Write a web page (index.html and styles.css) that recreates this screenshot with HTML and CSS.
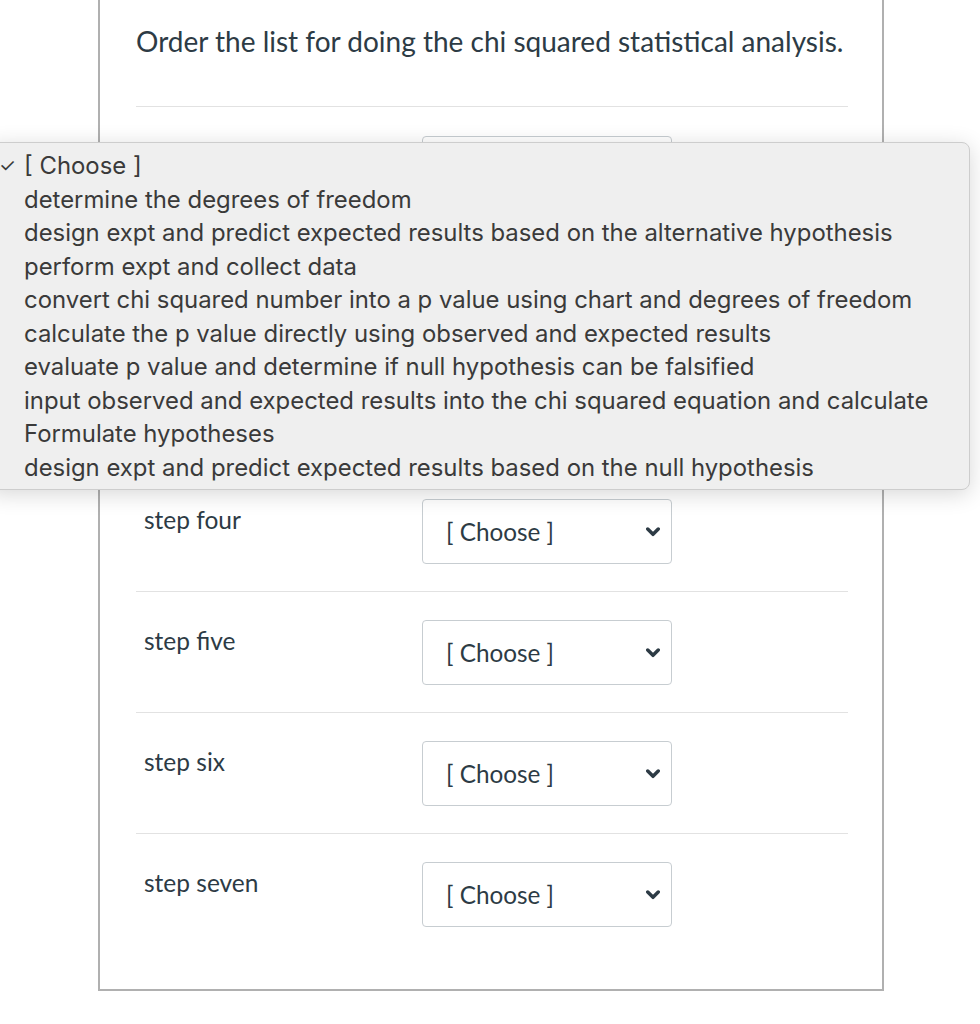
FILE: index.html
```html
<!DOCTYPE html>
<html>
<head>
<meta charset="utf-8">
<link rel="stylesheet" href="styles.css">
</head>
<body>
<div class="card">
  <div class="question">Order the list for doing the chi squared statistical analysis.</div>
  <div class="row">
    <div class="label">step one</div>
    <div class="select"><span>[ Choose ]</span><svg class="chev" viewBox="0 0 12 8"><path d="M1.5 1.5 L6 6 L10.5 1.5" /></svg></div>
  </div>
  <div class="row">
    <div class="label">step two</div>
    <div class="select"><span>[ Choose ]</span><svg class="chev" viewBox="0 0 12 8"><path d="M1.5 1.5 L6 6 L10.5 1.5" /></svg></div>
  </div>
  <div class="row">
    <div class="label">step three</div>
    <div class="select"><span>[ Choose ]</span><svg class="chev" viewBox="0 0 12 8"><path d="M1.5 1.5 L6 6 L10.5 1.5" /></svg></div>
  </div>
  <div class="row">
    <div class="label">step four</div>
    <div class="select"><span>[ Choose ]</span><svg class="chev" viewBox="0 0 12 8"><path d="M1.5 1.5 L6 6 L10.5 1.5" /></svg></div>
  </div>
  <div class="row">
    <div class="label">step five</div>
    <div class="select"><span>[ Choose ]</span><svg class="chev" viewBox="0 0 12 8"><path d="M1.5 1.5 L6 6 L10.5 1.5" /></svg></div>
  </div>
  <div class="row">
    <div class="label">step six</div>
    <div class="select"><span>[ Choose ]</span><svg class="chev" viewBox="0 0 12 8"><path d="M1.5 1.5 L6 6 L10.5 1.5" /></svg></div>
  </div>
  <div class="row last">
    <div class="label">step seven</div>
    <div class="select"><span>[ Choose ]</span><svg class="chev" viewBox="0 0 12 8"><path d="M1.5 1.5 L6 6 L10.5 1.5" /></svg></div>
  </div>
</div>
<ul class="menu">
  <li class="checked"><span class="check">✓</span>[ Choose ]</li>
  <li>determine the degrees of freedom</li>
  <li>design expt and predict expected results based on the alternative hypothesis</li>
  <li>perform expt and collect data</li>
  <li>convert chi squared number into a p value using chart and degrees of freedom</li>
  <li>calculate the p value directly using observed and expected results</li>
  <li>evaluate p value and determine if null hypothesis can be falsified</li>
  <li>input observed and expected results into the chi squared equation and calculate</li>
  <li>Formulate hypotheses</li>
  <li>design expt and predict expected results based on the null hypothesis</li>
</ul>
</body>
</html>
```
FILE: styles.css
```css
html, body {
  margin: 0;
  padding: 0;
  background: #ffffff;
}
body {
  position: relative;
  width: 980px;
  height: 1024px;
  overflow: hidden;
  font-family: Lato, "Liberation Sans", sans-serif;
  color: #2d3b45;
}
.card {
  margin-left: 98px;
  width: 712px;
  box-sizing: content-box;
  border: 2px solid #b0b0b0;
  border-top: 0;
  padding: 26px 34px 35px 36px;
}
.question {
  font-size: 28px;
  line-height: 31px;
  padding-bottom: 49px;
  border-bottom: 1px solid #e2e2e2;
  margin-bottom: 1px;
  white-space: nowrap;
}
.row {
  display: flex;
  align-items: flex-start;
  padding: 28px 0 27px 0;
  border-bottom: 1px solid #e2e2e2;
}
.row.last {
  border-bottom: 0;
}
.label {
  width: 278px;
  padding-left: 8px;
  padding-top: 8px;
  font-size: 24.5px;
  line-height: 26px;
}
.select {
  width: 250px;
  height: 65px;
  box-sizing: border-box;
  border: 1px solid #c7cdd1;
  border-radius: 4px;
  display: flex;
  align-items: center;
  justify-content: space-between;
  padding: 0 11px 0 23px;
  font-size: 24.3px;
  background: #fff;
}
.chev {
  width: 14px;
  height: 10px;
  fill: none;
  stroke: #2d3b45;
  stroke-width: 3;
  stroke-linecap: round;
  stroke-linejoin: round;
}
.menu {
  position: absolute;
  top: 142px;
  left: -12px;
  width: 982px;
  height: 348px;
  box-sizing: border-box;
  margin: 0;
  padding: 6px 0 0 0;
  list-style: none;
  background: #efefef;
  border: 1px solid #cdcdcd;
  border-radius: 8px;
  box-shadow: 0 4px 22px rgba(0, 0, 0, 0.16);
  font-family: Inter, "Noto Sans", sans-serif;
  font-size: 23.9px;
  color: #3a3a3a;
}
.menu li {
  position: relative;
  height: 33.5px;
  line-height: 33.5px;
  padding-left: 35px;
  white-space: nowrap;
}
.check {
  position: absolute;
  left: 10px;
  font-size: 19px;
  color: #3a3a3a;
}
```
